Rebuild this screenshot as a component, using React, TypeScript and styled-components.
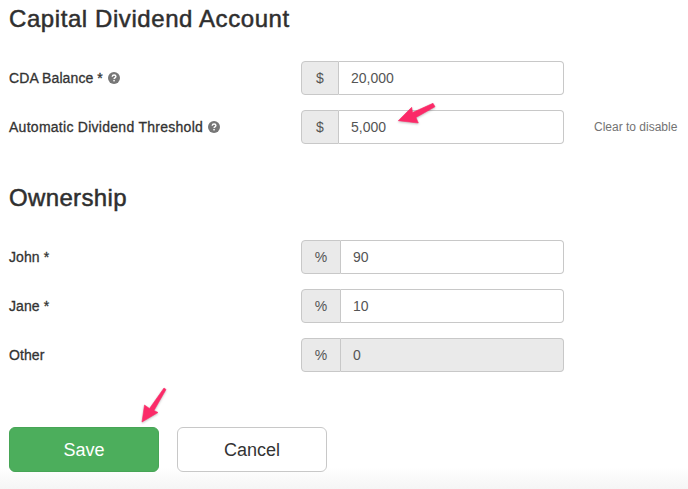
import * as React from 'react';
import styled, { createGlobalStyle } from 'styled-components';

const GlobalStyle = createGlobalStyle`
  html, body {
    margin: 0;
    padding: 0;
    background: #fff;
    overflow: hidden;
  }
  body {
    font-family: "Liberation Sans", Arial, sans-serif;
    color: #333;
  }
`;

type FieldProps = {
  label: string;
  addon: string;
  value: string;
  help?: boolean;
  disabled?: boolean;
  hint?: string;
  tracking?: number;
  arrow?: React.ReactNode;
};

const HelpIcon = () => (
  <HelpSvg viewBox='0 0 12 12'>
    <circle cx='6' cy='6' r='6' fill='#777' />
    <path d='M4.2 4.7c.1-1.1.9-1.7 1.9-1.7s1.8.6 1.8 1.5c0 1.3-1.8 1.3-1.8 2.5' fill='none' stroke='#fff' strokeWidth='1.4' />
    <rect x='5.3' y='7.9' width='1.5' height='1.5' fill='#fff' />
  </HelpSvg>
);

const Arrow = ({ d }: { d: string }) => (
  <path d={d} fill='#fb2a68' stroke='#fb2a68' strokeWidth='0.6' strokeLinejoin='round' />
);

const Field = ({ label, addon, value, help, disabled, hint, tracking = 0.1, arrow }: FieldProps) => (
  <Row>
    <Label $tracking={tracking}>
      {label}
      {help && <HelpIcon />}
    </Label>
    <InputGroup>
      <Addon $wide={addon === '%'}>{addon}</Addon>
      <Input $disabled={disabled} defaultValue={value} readOnly={disabled} />
      {arrow}
    </InputGroup>
    {hint && <Hint>{hint}</Hint>}
  </Row>
);

export default function App() {
  return (
    <Page>
      <GlobalStyle />
      <Heading>Capital Dividend Account</Heading>
      <Fields>
        <Field label='CDA Balance *' addon='$' value='20,000' help />
        <Field
          label='Automatic Dividend Threshold'
          addon='$'
          value='5,000'
          help
          tracking={0.27}
          hint='Clear to disable'
          arrow={
            <InputArrow viewBox='0 0 44 26'>
              <Arrow d='M1.3 18.7 L14.7 5.3 L15.5 10.5 L36 1.3 L38 4.7 L19 15.5 L21.3 21 Z' />
            </InputArrow>
          }
        />
      </Fields>
      <OwnershipHeading>Ownership</OwnershipHeading>
      <Fields>
        <Field label='John *' addon='%' value='90' />
        <Field label='Jane *' addon='%' value='10' />
        <Field label='Other' addon='%' value='0' disabled />
      </Fields>
      <Actions>
        <SaveArrow viewBox='0 0 28 38'>
          <Arrow d='M2 36 L4.5 19 L9.5 22.5 L24 2 L26 3.5 L14 24.5 L18 26.5 Z' />
        </SaveArrow>
        <SaveButton type='button'>Save</SaveButton>
        <CancelButton type='button'>Cancel</CancelButton>
      </Actions>
      <BottomFade />
    </Page>
  );
}

const Page = styled.div`
  position: relative;
  width: 688px;
  height: 489px;
  box-sizing: border-box;
  padding: 5px 0 0 9px;
  overflow: hidden;
`;

const Heading = styled.h2`
  margin: 0;
  font-size: 24px;
  line-height: 28px;
  font-weight: 400;
  letter-spacing: 0.58px;
  color: #2f2f2f;
  -webkit-text-stroke: 0.5px #2f2f2f;
`;

const OwnershipHeading = styled(Heading)`
  margin-top: 40px;
  letter-spacing: 0.35px;
`;

const Fields = styled.div`
  display: flex;
  flex-direction: column;
  gap: 15px;
  margin-top: 28px;
`;

const Row = styled.div`
  display: flex;
  align-items: center;
  height: 34px;
`;

const Label = styled.label<{ $tracking: number }>`
  display: flex;
  align-items: center;
  gap: 5px;
  width: 292px;
  flex: none;
  font-size: 14px;
  letter-spacing: ${(p) => p.$tracking}px;
  color: #333;
  -webkit-text-stroke: 0.3px #333;
`;

const HelpSvg = styled.svg`
  width: 12px;
  height: 12px;
  flex: none;
`;

const InputGroup = styled.div`
  position: relative;
  display: flex;
  width: 263px;
  height: 34px;
  flex: none;
`;

const Addon = styled.span<{ $wide?: boolean }>`
  display: flex;
  align-items: center;
  justify-content: center;
  box-sizing: border-box;
  width: ${(p) => (p.$wide ? 40 : 38)}px;
  flex: none;
  font-size: 14px;
  color: #555;
  background: #eaeaea;
  border: 1px solid #c8c8c8;
  border-radius: 4px 0 0 4px;
`;

const Input = styled.input<{ $disabled?: boolean }>`
  flex: 1;
  min-width: 0;
  box-sizing: border-box;
  height: 34px;
  margin: 0;
  padding: 0 12px;
  font-family: inherit;
  font-size: 14px;
  color: #555;
  outline: none;
  background: ${(p) => (p.$disabled ? '#eaeaea' : '#fff')};
  border: 1px solid #c8c8c8;
  border-left: none;
  border-radius: 0 4px 4px 0;
`;

const Hint = styled.span`
  margin-left: 30px;
  font-size: 12px;
  color: #737373;
  white-space: nowrap;
`;

const InputArrow = styled.svg`
  position: absolute;
  left: 96px;
  top: -8px;
  width: 44px;
  height: 26px;
  overflow: visible;
  filter: drop-shadow(0 1px 1px rgba(0, 0, 0, 0.25));
`;

const SaveArrow = styled.svg`
  position: absolute;
  left: 131px;
  top: -41px;
  width: 28px;
  height: 38px;
  overflow: visible;
  filter: drop-shadow(0 1px 1px rgba(0, 0, 0, 0.25));
`;

const Actions = styled.div`
  position: relative;
  display: flex;
  gap: 18px;
  margin-top: 55px;
  z-index: 1;
`;

const Button = styled.button`
  width: 150px;
  height: 45px;
  box-sizing: border-box;
  margin: 0;
  padding: 2px 0 0;
  font-family: inherit;
  font-size: 18px;
  border-radius: 6px;
`;

const SaveButton = styled(Button)`
  color: #fff;
  background: #4cae5c;
  border: 1px solid #47a556;
`;

const CancelButton = styled(Button)`
  color: #333;
  background: #fff;
  border: 1px solid #c8c8c8;
`;

const BottomFade = styled.div`
  position: absolute;
  left: 0;
  right: 0;
  bottom: 0;
  height: 22px;
  background: linear-gradient(to bottom, rgba(245, 245, 245, 0), #f5f5f5);
`;
